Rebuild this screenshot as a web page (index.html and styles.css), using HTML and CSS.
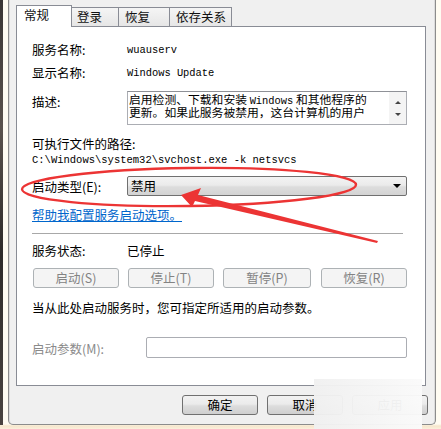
FILE: index.html
```html
<!DOCTYPE html>
<html lang="zh-CN">
<head>
<meta charset="utf-8">
<link rel="stylesheet" href="styles.css">
</head>
<body>
<div class="screen">
  <div class="edge"></div>
  <div class="dialog">
    <div class="tabs">
      <div class="tab active t1">常规</div>
      <div class="tab t2">登录</div>
      <div class="tab t3">恢复</div>
      <div class="tab t4">依存关系</div>
    </div>
    <div class="panel">
      <div class="row r1"><span class="label">服务名称:</span><span class="mono">wuauserv</span></div>
      <div class="row r2"><span class="label">显示名称:</span><span class="mono">Windows Update</span></div>
      <div class="row r3">
        <span class="label lab-desc">描述:</span>
        <div class="textarea">
          <div class="ta-text"><div class="ta-line">启用检测、下载和安装 <span class="mono">Windows</span> 和其他程序的</div><div class="ta-line">更新。如果此服务被禁用，这台计算机的用户</div></div>
          <div class="ta-scroll"><span class="up"></span><span class="down"></span></div>
        </div>
      </div>
      <div class="row r4">可执行文件的路径:</div>
      <div class="row r5 mono path">C:\Windows\system32\svchost.exe -k netsvcs</div>
      <div class="row r6">
        <span class="label">启动类型(E):</span>
        <div class="combo"><span>禁用</span><span class="caret"></span></div>
      </div>
      <div class="row r7"><span class="link">帮助我配置服务启动选项。</span></div>
      <div class="sep"></div>
      <div class="row r8"><span class="label">服务状态:</span><span>已停止</span></div>
      <div class="btnrow">
        <div class="dbtn b1">启动(S)</div>
        <div class="dbtn b2">停止(T)</div>
        <div class="dbtn b3">暂停(P)</div>
        <div class="dbtn b4">恢复(R)</div>
      </div>
      <div class="row r10">当从此处启动服务时，您可指定所适用的启动参数。</div>
      <div class="row r11">
        <span class="label grey">启动参数(M):</span>
        <div class="input"></div>
      </div>
    </div>
    <div class="footer">
      <div class="btn">确定</div>
      <div class="btn">取消</div>
      <div class="btn">应用</div>
    </div>
  </div>
</div>
<svg class="annot" width="441" height="429" viewBox="0 0 441 429">
  <ellipse cx="189" cy="187" rx="167" ry="19" transform="rotate(-0.8 189 187)" fill="none" stroke="#ec3434" stroke-width="2.4"/>
  <polygon points="181,195 201,188 198,195 378,241 377,243 195,201 192,207" fill="#ec3434"/>
</svg>
<div class="watermark"></div>
</body>
</html>
```

FILE: styles.css
```css
html, body {
  margin: 0;
  padding: 0;
}
body {
  width: 441px;
  height: 429px;
  overflow: hidden;
  background: linear-gradient(to bottom, #fffcf2 0, #fffcf2 424px, #f6e6cc 426px, #fbf0dc 429px);
  font-family: "Noto Sans CJK SC", "Noto Sans", sans-serif;
  font-size: 12.5px;
  color: #000;
  position: relative;
}
.screen {
  display: flex;
  height: 425px;
}
.edge {
  width: 3px;
  margin-right: 5px;
  background: linear-gradient(to bottom, #3a3634, #5a524c 30%, #2e2b29 60%, #4a4440);
}
.dialog {
  width: 410px;
  height: 419px;
  padding: 5px 9px 0 7px;
  background: #f0f0f0;
  border: 1px solid #8c8c8c;
  border-top: none;
  border-radius: 0 0 5px 5px;
  box-shadow: inset 1px 0 0 #dcdcdc, inset -1px 0 0 #dcdcdc;
}
.tabs {
  display: flex;
  align-items: flex-end;
  height: 21px;
}
.tab {
  box-sizing: border-box;
  height: 19px;
  border: 1px solid #898c95;
  border-bottom: none;
  margin-left: -1px;
  background: linear-gradient(to bottom, #f5f5f5, #e6e6e6);
  line-height: 18px;
  padding-left: 6px;
  color: #111;
}
.tab.active {
  height: 22px;
  margin-left: 0;
  margin-bottom: -1px;
  background: #fff;
  position: relative;
  z-index: 1;
  line-height: 18px;
  padding-left: 7px;
}
.t1 { width: 56px; }
.t2 { width: 48px; padding-left: 5px; }
.t3 { width: 52px; }
.t4 { width: 63px; }
.panel {
  box-sizing: border-box;
  width: 410px;
  height: 360px;
  background: #fff;
  border: 1px solid #898c95;
  padding-left: 15px;
  padding-top: 15px;
}
.row {
  display: flex;
  align-items: flex-start;
  line-height: 16px;
  height: 16px;
}
.label {
  width: 95px;
  flex: none;
}
.mono {
  font-family: "Liberation Mono", "DejaVu Sans Mono", monospace;
  font-size: 10.4px;
}
.r2 { margin-top: 7px; }
.r3 { margin-top: 10px; height: 34px; }
.lab-desc { padding-top: 3px; }
.textarea {
  box-sizing: border-box;
  width: 280px;
  height: 34px;
  border: 1px solid #abadb3;
  border-top-color: #8f9197;
  display: flex;
}
.ta-text {
  flex: 1;
  padding: 1px 0 0 1px;
  font-size: 11.8px;
  white-space: nowrap;
}
.ta-line {
  height: 12.5px;
  line-height: 12.5px;
}
.ta-scroll {
  width: 17px;
  background: #f4f4f4;
  display: flex;
  flex-direction: column;
  align-items: center;
  justify-content: space-between;
  padding: 9px 0 8px;
  box-sizing: border-box;
}
.up, .down {
  width: 0;
  height: 0;
  border-left: 3px solid transparent;
  border-right: 3px solid transparent;
}
.up { border-bottom: 3px solid #444; }
.down { border-top: 3px solid #444; }
.r4 { margin-top: 11px; }
.path { font-size: 10.5px; }
.r6 { margin-top: 8px; height: 20px; align-items: center; }
.r6 .label { padding-top: 1px; }
.combo {
  box-sizing: border-box;
  width: 280px;
  height: 20px;
  border: 1px solid #707070;
  border-radius: 2px;
  background: linear-gradient(to bottom, #f3f3f3 0%, #ebebeb 45%, #dddddd 55%, #d3d3d3 100%);
  display: flex;
  align-items: center;
  justify-content: space-between;
  padding: 0 5px 0 3px;
  line-height: 16px;
}
.caret {
  width: 0;
  height: 0;
  border-left: 4px solid transparent;
  border-right: 4px solid transparent;
  border-top: 4px solid #000;
}
.r7 { margin-top: 11px; }
.link {
  color: #0066cc;
  text-decoration: underline;
}
.sep {
  width: 371px;
  height: 1px;
  background: #a8a8a8;
  border-bottom: 1px solid #fff;
  margin-top: 10px;
}
.r8 { margin-top: 8px; }
.btnrow {
  display: flex;
  gap: 9px;
  margin-top: 9px;
  margin-left: 1px;
}
.dbtn {
  box-sizing: border-box;
  height: 20px;
  border: 1px solid #adb2b5;
  border-radius: 3px;
  background: #f4f4f4;
  color: #838383;
  text-align: center;
  line-height: 18px;
}
.b1 { width: 86px; }
.b2 { width: 86px; }
.b3 { width: 88px; }
.b4 { width: 86px; margin-left: 1px; }
.r10 { margin-top: 12px; }
.r11 { margin-top: 21px; height: 21px; align-items: center; }
.r11 .label { width: 114px; padding-top: 3px; }
.grey { color: #8a8a8a; }
.input {
  box-sizing: border-box;
  width: 261px;
  height: 21px;
  border: 1px solid #abadb3;
  border-radius: 2px;
  background: #fff;
}
.footer {
  display: flex;
  justify-content: flex-end;
  gap: 9px;
  margin-top: 9px;
  margin-right: -2px;
}
.btn {
  box-sizing: border-box;
  width: 76px;
  height: 20px;
  border: 1px solid #707070;
  border-radius: 3px;
  background: linear-gradient(to bottom, #f2f2f2 0%, #ebebeb 45%, #dddddd 55%, #cfcfcf 100%);
  text-align: center;
  line-height: 18px;
}
.annot {
  position: absolute;
  left: 0;
  top: 0;
  pointer-events: none;
}
.watermark {
  position: absolute;
  left: 314px;
  top: 379px;
  width: 108px;
  height: 50px;
  background: linear-gradient(to right, rgba(240,240,240,0.96), rgba(250,250,250,0.97));
}
```
